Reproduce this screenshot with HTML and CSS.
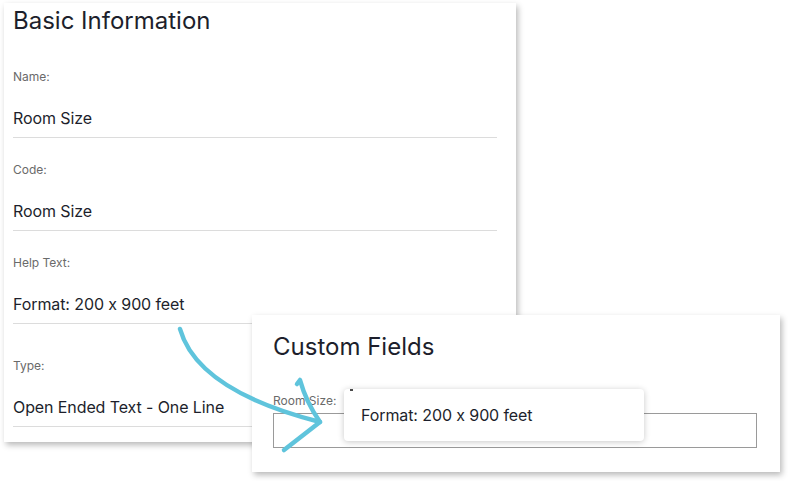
FILE: index.html
```html
<!DOCTYPE html>
<html>
<head>
<meta charset="utf-8">
<link rel="stylesheet" href="styles.css">
</head>
<body>
<div class="stage">
  <section class="card basic">
    <h1 class="title">Basic Information</h1>
    <div class="field">
      <div class="label">Name:</div>
      <div class="value">Room Size</div>
    </div>
    <div class="field">
      <div class="label">Code:</div>
      <div class="value">Room Size</div>
    </div>
    <div class="field">
      <div class="label">Help Text:</div>
      <div class="value">Format: 200 x 900 feet</div>
    </div>
    <div class="field field-wide">
      <div class="label">Type:</div>
      <div class="value">Open Ended Text - One Line</div>
    </div>
  </section>

  <section class="card custom">
    <h1 class="title">Custom Fields</h1>
    <div class="label">Room Size:</div>
    <div class="input"></div>
    <div class="tooltip"><span class="tip-notch"></span>Format: 200 x 900 feet</div>
  </section>

  <svg class="arrow" width="788" height="481" viewBox="0 0 788 481" xmlns="http://www.w3.org/2000/svg">
    <g fill="none" stroke="#5fc4dc" stroke-width="4.5" stroke-linecap="round" stroke-linejoin="round">
      <path d="M180,329 C190,364 226,398 320,422"/>
      <path d="M297,384 L300,380 Q306,402 320,422 L284,450"/>
    </g>
  </svg>
</div>
</body>
</html>
```

FILE: styles.css
```css
html, body {
  margin: 0;
  padding: 0;
  background: #ffffff;
}

body {
  font-family: "Inter", "Noto Sans", "Liberation Sans", sans-serif;
  font-feature-settings: "calt" 0;
  color: #1d1f2c;
}

.stage {
  position: relative;
  width: 788px;
  height: 481px;
  overflow: hidden;
}

.card {
  background: #ffffff;
  box-sizing: border-box;
  box-shadow: 2px 3px 6px rgba(0, 0, 0, 0.28);
}

.title {
  margin: 0;
  font-size: 24px;
  line-height: 32px;
  font-weight: 400;
  color: #1d1f2c;
}

.basic {
  margin: 3px 0 0 4px;
  width: 512px;
  height: 439px;
  padding: 2px 19px 0 9px;
}

.basic .title {
  margin-bottom: 8px;
}

.field {
  padding: 24px 0 7px;
  border-bottom: 1px solid #dcdcdc;
}

.field-wide {
  padding-top: 34px;
}

.label {
  font-size: 12px;
  line-height: 16px;
  color: #6a6a6a;
}

.value {
  margin-top: 21px;
  font-size: 16px;
  line-height: 24px;
  letter-spacing: -0.1px;
  color: #1d1f2c;
}

.custom {
  position: absolute;
  left: 252px;
  top: 315px;
  width: 528px;
  height: 157px;
  padding: 16px 23px 0 21px;
}

.custom .label {
  margin-top: 30px;
}

.input {
  margin-top: 4px;
  width: 484px;
  height: 35px;
  box-sizing: border-box;
  border: 1px solid #9a9a9a;
}

.tooltip {
  position: absolute;
  left: 92px;
  top: 74px;
  width: 300px;
  height: 52px;
  box-sizing: border-box;
  padding-left: 17px;
  line-height: 52px;
  font-size: 16px;
  letter-spacing: -0.1px;
  color: #1d1f2c;
  background: #ffffff;
  border-radius: 4px;
  box-shadow: 0 1px 6px rgba(0, 0, 0, 0.22);
}

.tip-notch {
  position: absolute;
  left: 6px;
  top: 0;
  width: 3px;
  height: 2px;
  background: #4a4a4a;
}

.arrow {
  position: absolute;
  left: 0;
  top: 0;
  pointer-events: none;
}
```
